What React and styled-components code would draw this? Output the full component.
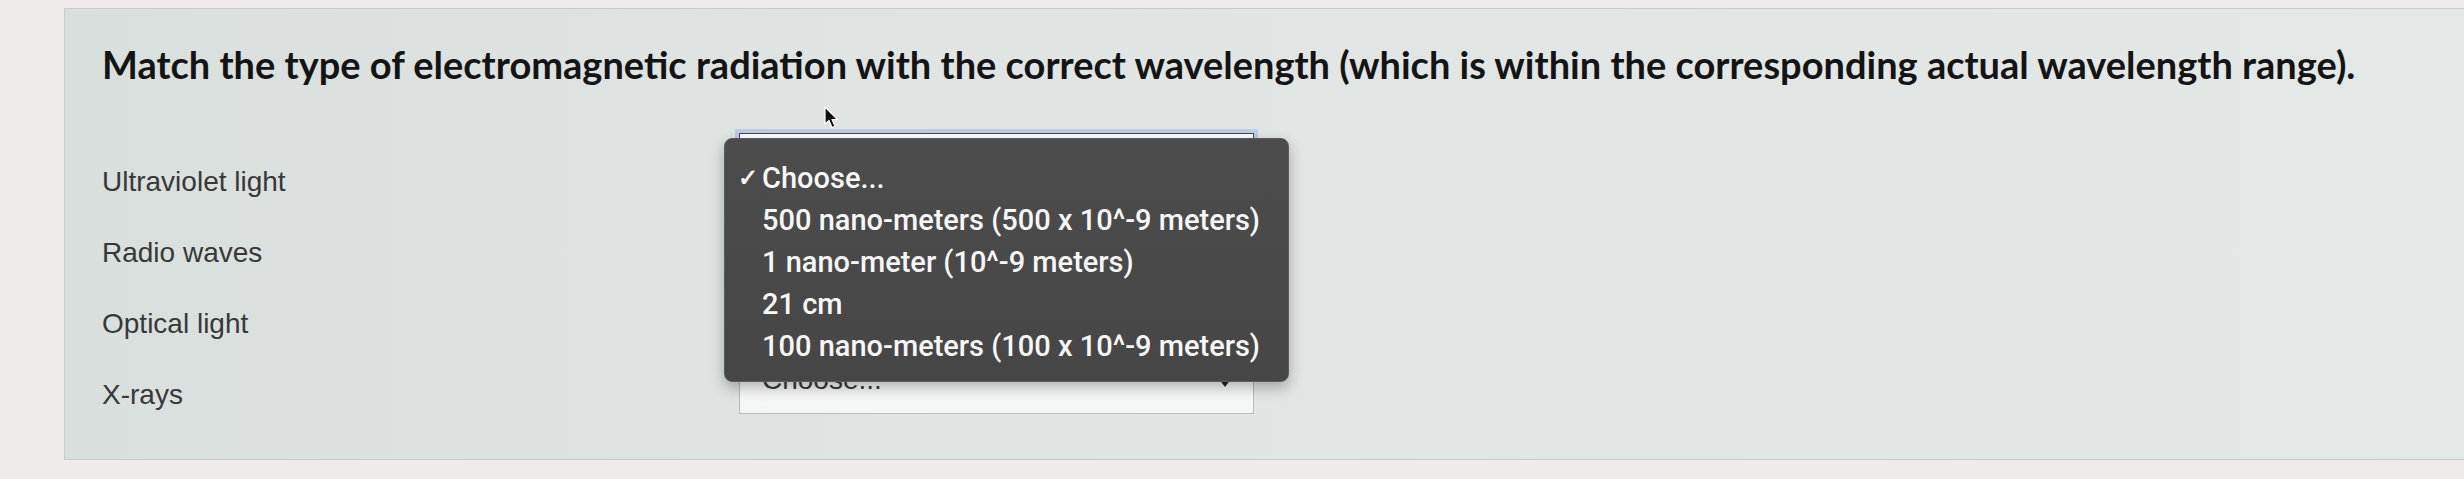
import React from 'react'
import styled, { createGlobalStyle } from 'styled-components'

const GlobalStyle = createGlobalStyle`
html, body {
  margin: 0;
  padding: 0;
  background: #eeebea;
}
#root {
  width: 2464px;
  height: 479px;
  overflow: hidden;
}
`;

const Page = styled.div`
position: relative;
width: 2464px;
height: 479px;
padding: 8px 0 0 64px;
box-sizing: border-box;
background: #eeebea;
`;

const Panel = styled.section`
height: 452px;
box-sizing: border-box;
border: 1px solid #c6cdcb;
border-right: none;
background: linear-gradient(90deg, #d9dfdd 0%, #e0e5e3 35%, #e3e7e6 100%);
padding: 33px 0 0 37px;
`;

const Title = styled.h1`
margin: 0;
font-family: Lato, "Open Sans", sans-serif;
font-size: 38px;
font-weight: 700;
line-height: 45px;
color: #141414;
white-space: nowrap;
`;

const Rows = styled.div`
margin-top: 46px;
display: flex;
flex-direction: column;
`;

const Row = styled.div`
display: grid;
grid-template-columns: 637px 515px;
height: 71px;
align-items: start;
`;

const Label = styled.div`
margin-top: 33px;
font-family: "Liberation Sans", Arial, sans-serif;
font-size: 28px;
color: #383838;
line-height: 32px;
`;

const SelectBox = styled.div`
height: 68px;
box-sizing: border-box;
display: flex;
align-items: center;
justify-content: space-between;
padding: 0 22px 0 22px;
background: linear-gradient(180deg, #fdfdfd, #f4f5f5);
border: 1px solid ${p => (p.$focused ? '#4a4a4a' : '#b8bcbc')};
box-shadow: ${p => (p.$focused ? '0 0 0 4px #bccbe6' : 'none')};
font-family: "Liberation Sans", Arial, sans-serif;
font-size: 28px;
color: #3a3a3a;
`;

const Caret = styled.span`
width: 0;
height: 0;
margin-top: 6px;
border-left: 6px solid transparent;
border-right: 6px solid transparent;
border-top: 8px solid #222;
`;

const Menu = styled.ul`
position: absolute;
left: 724px;
top: 138px;
width: 565px;
height: 244px;
box-sizing: border-box;
margin: 0;
padding: 18px 0 0 0;
list-style: none;
background: linear-gradient(180deg, #4c4c4c, #464646);
border: 1px solid #5c5c5c;
border-radius: 8px;
box-shadow: 0 6px 14px rgba(0, 0, 0, 0.28);
`;

const Item = styled.li`
position: relative;
height: 42px;
line-height: 42px;
padding-left: 37px;
font-family: Roboto, "Liberation Sans", sans-serif;
font-size: 29px;
font-weight: 500;
color: #f7f7f7;
white-space: nowrap;
`;

const Check = styled.span`
position: absolute;
left: 13px;
font-size: 24px;
font-weight: 700;
`;

const Cursor = styled.svg`
position: absolute;
left: 824px;
top: 106px;
width: 15px;
height: 23px;
`;

const labels = ['Ultraviolet light', 'Radio waves', 'Optical light', 'X-rays']
const options = [
  'Choose...',
  '500 nano-meters (500 x 10^-9 meters)',
  '1 nano-meter (10^-9 meters)',
  '21 cm',
  '100 nano-meters (100 x 10^-9 meters)',
]

export default function App() {
  return (
    <Page>
      <GlobalStyle />
      <Panel>
        <Title>
          Match the type of electromagnetic radiation with the correct wavelength (which is within the corresponding actual wavelength range).
        </Title>
        <Rows>
          {labels.map((l, i) => (
            <Row key={l}>
              <Label>{l}</Label>
              <SelectBox $focused={i === 0}>
                <span>Choose...</span>
                <Caret />
              </SelectBox>
            </Row>
          ))}
        </Rows>
      </Panel>
      <Menu>
        {options.map((o, i) => (
          <Item key={o}>
            {i === 0 && <Check>✓</Check>}
            {o}
          </Item>
        ))}
      </Menu>
      <Cursor viewBox="0 0 15 23">
        <path d="M1 1 L1 18 L5 14.5 L8 21.5 L11 20.2 L8 13.5 L13.5 13.5 Z" fill="#111" stroke="#fff" strokeWidth="1.2" strokeLinejoin="round" />
      </Cursor>
    </Page>
  )
}
